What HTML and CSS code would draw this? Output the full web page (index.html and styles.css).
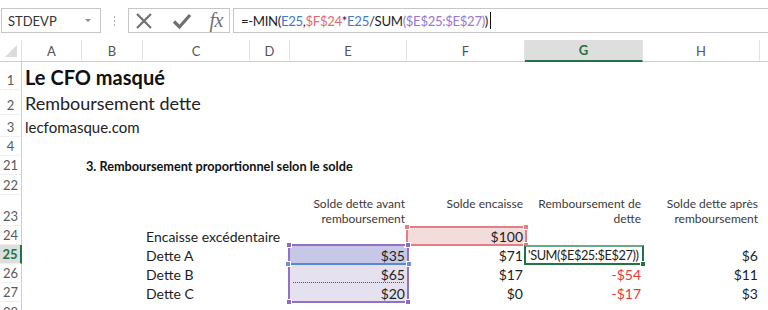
FILE: index.html
```html
<!DOCTYPE html>
<html lang="fr">
<head>
<meta charset="utf-8">
<title>Le CFO masqué</title>
<link rel="stylesheet" href="styles.css">
</head>
<body>
<div class="fbar">
  <div class="namebox"><span class="nb-text">STDEVP</span><span class="dd"></span></div>
  <div class="grip"><i></i><i></i><i></i></div>
  <div class="btns">
    <svg class="ico" width="20" height="20" viewBox="0 0 20 20"><path d="M3 3 L17 17 M17 3 L3 17" stroke="#707070" stroke-width="2.2" fill="none"/></svg>
    <svg class="ico" width="22" height="20" viewBox="0 0 22 20"><path d="M3 10.5 L8.5 16 L19 4" stroke="#707070" stroke-width="3.2" fill="none" stroke-linejoin="miter"/></svg>
    <span class="fx">fx</span>
  </div>
  <div class="formula"><span>=-MIN(</span><span class="fb">E25</span><span>,</span><span class="fr">$F$24</span><span>*</span><span class="fb">E25</span><span>/SUM</span><span class="fp">($E$25:$E$27)</span><span>)</span><span class="caret"></span></div>
</div>

<div class="sheet">
  <div class="row hdr">
    <div class="corner"><span class="tri"></span></div>
    <div class="ch">A</div><div class="ch">B</div><div class="ch">C</div><div class="ch">D</div><div class="ch">E</div><div class="ch">F</div><div class="ch ch-active">G</div><div class="ch">H</div><div class="ch"></div>
  </div>

  <div class="row r1">
    <div class="rh">1</div>
    <div class="c title span-all">Le CFO masqué</div>
  </div>
  <div class="row r2">
    <div class="rh">2</div>
    <div class="c subtitle span-all">Remboursement dette</div>
  </div>
  <div class="row r3">
    <div class="rh">3</div>
    <div class="c site span-all">lecfomasque.com</div>
  </div>
  <div class="row r4">
    <div class="rh">4</div>
  </div>
  <div class="row r21">
    <div class="rh">21</div>
    <div class="c"></div>
    <div class="c section span-rest">3. Remboursement proportionnel selon le solde</div>
  </div>
  <div class="row r22">
    <div class="rh">22</div>
  </div>
  <div class="row r23">
    <div class="rh">23</div>
    <div class="c"></div><div class="c"></div><div class="c"></div><div class="c"></div>
    <div class="c colhead">Solde dette avant remboursement</div>
    <div class="c colhead">Solde encaisse</div>
    <div class="c colhead">Remboursement de dette</div>
    <div class="c colhead">Solde dette après remboursement</div>
  </div>
  <div class="row r24">
    <div class="rh">24</div>
    <div class="c"></div><div class="c"></div>
    <div class="c">Encaisse excédentaire</div>
    <div class="c"></div><div class="c"></div>
    <div class="c num ref-red">$100<span class="box red"><i class="h tl"></i><i class="h tr"></i><i class="h bl"></i><i class="h br"></i></span></div>
  </div>
  <div class="row r25">
    <div class="rh rh-active">25</div>
    <div class="c"></div><div class="c"></div>
    <div class="c">Dette A</div>
    <div class="c"></div>
    <div class="c num e25">$35
      <span class="box purple"><i class="h tl"></i><i class="h tr"></i><i class="h bl"></i><i class="h br"></i></span>
      <span class="blueline"><i class="h bl"></i><i class="h br"></i></span>
    </div>
    <div class="c num">$71</div>
    <div class="c edit">'SUM($E$25:$E$27))<span class="box green"><i class="fill"></i></span></div>
    <div class="c num">$6</div>
  </div>
  <div class="row r26">
    <div class="rh">26</div>
    <div class="c"></div><div class="c"></div>
    <div class="c">Dette B</div>
    <div class="c"></div>
    <div class="c num erange dotted">$65</div>
    <div class="c num">$17</div>
    <div class="c num neg">-$54</div>
    <div class="c num">$11</div>
  </div>
  <div class="row r27">
    <div class="rh">27</div>
    <div class="c"></div><div class="c"></div>
    <div class="c">Dette C</div>
    <div class="c"></div>
    <div class="c num erange">$20</div>
    <div class="c num">$0</div>
    <div class="c num neg">-$17</div>
    <div class="c num">$3</div>
  </div>
  <div class="row r28">
    <div class="rh">28</div>
  </div>
</div>
</body>
</html>
```

FILE: styles.css
```css
* { box-sizing: border-box; }
html, body { margin: 0; padding: 0; background: #fff; }
body {
  width: 768px;
  height: 310px;
  overflow: hidden;
  font-family: Lato, "Liberation Sans", sans-serif;
  color: #1e1e1e;
}

/* ---------- formula bar ---------- */
.fbar {
  display: flex;
  align-items: stretch;
  height: 25px;
  margin-top: 8px;
}
.namebox {
  width: 100px;
  margin-left: 1px;
  border: 1px solid #c6c6c6;
  display: flex;
  align-items: center;
  justify-content: space-between;
  padding: 0 9px 0 6px;
  font-size: 13px;
  color: #333;
}
.dd {
  width: 0; height: 0;
  border-left: 3px solid transparent;
  border-right: 3px solid transparent;
  border-top: 3px solid #8a8a8a;
}
.grip {
  width: 27px;
  display: flex;
  flex-direction: column;
  align-items: center;
  justify-content: center;
  gap: 2px;
}
.grip i {
  display: block;
  width: 1px; height: 2px;
  background: #b0b0b0;
}
.btns {
  width: 102px;
  border: 1px solid #c6c6c6;
  display: flex;
  align-items: center;
  justify-content: space-between;
  padding: 0 6px 0 5px;
}
.fx {
  font-family: "Liberation Serif", serif;
  font-style: italic;
  font-size: 20px;
  color: #707070;
  line-height: 1;
  margin-top: -2px;
  letter-spacing: -0.5px;
}
.formula {
  flex: 1;
  margin-left: 3px;
  border: 1px solid #c6c6c6;
  border-right: none;
  display: flex;
  align-items: center;
  padding-left: 7px;
  font-size: 13.2px;
  letter-spacing: -0.35px;
  color: #1e1e1e;
  white-space: pre;
}
.fb { color: #4a78c8; }
.fr { color: #e06a6e; }
.fp { color: #9a78cf; }
.caret {
  display: inline-block;
  width: 1px;
  height: 17px;
  background: #111;
  margin-left: 2px;
}

/* ---------- sheet ---------- */
.sheet { margin-top: 7px; }
.row {
  display: grid;
  grid-template-columns: 22px 60px 61px 107px 40px 117px 118px 118px 117px 30px;
  height: 19px;
}
.hdr { height: 22px; border-bottom: 1px solid #cfcfcf; }
.r1 { height: 28px; }
.r2 { height: 25px; }
.r3 { height: 22px; }
.r22 { height: 20px; }
.r23 { height: 31px; }
.r28 { height: 20px; }

.corner {
  position: relative;
  border-right: 1px solid #e0e0e0;
}
.tri {
  position: absolute;
  right: 4px;
  bottom: 4px;
  width: 0; height: 0;
  border-left: 12px solid transparent;
  border-bottom: 12px solid #dcdcdc;
}
.ch {
  font-size: 13px;
  color: #555;
  display: flex;
  align-items: center;
  justify-content: center;
  border-right: 1px solid #e3e3e3;
}
.ch-active {
  background: #dedede;
  color: #217346;
  font-weight: bold;
  border-bottom: 2px solid #217346;
  margin-bottom: -1px;
}

.rh {
  grid-column: 1;
  font-size: 13px;
  color: #5a5a5a;
  display: flex;
  align-items: flex-end;
  justify-content: center;
  padding-bottom: 1px;
  border-right: 1px solid #cfcfcf;
  border-bottom: 1px solid #efefef;
  line-height: 16px;
}
.rh-active {
  background: #dedede;
  color: #217346;
  font-weight: bold;
  border-right: 2px solid #217346;
}

.c {
  position: relative;
  padding: 0 2px 0 3px;
  font-size: 14px;
  line-height: 17px;
  white-space: nowrap;
  display: flex;
  align-items: flex-end;
}
.span-all { grid-column: 2 / 10; }
.span-rest { grid-column: 3 / 10; }
.title { font-size: 20px; font-weight: bold; line-height: 26px; color: #111; }
.subtitle { font-size: 18px; line-height: 23px; color: #222; }
.site { font-size: 15px; line-height: 20px; color: #222; }
.section { font-size: 12.7px; font-weight: bold; padding-left: 4px; color: #111; }

.colhead {
  white-space: normal;
  font-size: 12px;
  line-height: 15px;
  text-align: right;
  align-items: flex-start;
  justify-content: flex-end;
  padding-top: 1px;
  color: #3a3a3a;
}
.num { justify-content: flex-end; }
.neg { color: #e33b3b; }

.ref-red { background: #f3dcdc; }
.e25 { background: #c7c8e8; }
.erange { background: #e6e1ef; }
.dotted::after {
  content: "";
  position: absolute;
  left: 3px; right: 3px; bottom: 0;
  border-bottom: 1px dotted #555;
}
.edit {
  font-size: 12.8px;
  letter-spacing: -0.45px;
  padding-left: 3px;
}

/* selection / reference boxes (overlays) */
.box {
  position: absolute;
  pointer-events: none;
  z-index: 2;
}
.box.red {
  left: -1px; right: -2px; top: 0; bottom: -1px;
  border: 2px solid #e47e82;
}
.box.purple {
  left: -2px; right: -2px; top: -1px;
  height: 59px;
  border: 2px solid #9270c2;
}
.box.green {
  left: -1px; right: -1px; top: 0; bottom: -1px;
  border: 2px solid #217346;
  border-top-color: #6aa886;
}
.blueline {
  position: absolute;
  left: -2px; right: -2px; bottom: -1px;
  height: 2px;
  background: #5b86d0;
  z-index: 3;
}
.h {
  position: absolute;
  width: 6px; height: 6px;
  border: 1px solid #fff;
}
.red .h { background: #e47e82; }
.purple .h { background: #8e6cbf; }
.blueline .h { background: #6a92d8; }
.h.tl { left: -4px; top: -4px; }
.h.tr { right: -4px; top: -4px; }
.h.bl { left: -4px; bottom: -4px; }
.h.br { right: -4px; bottom: -4px; }
.blueline .h.bl { left: -3px; bottom: -2px; }
.blueline .h.br { right: -3px; bottom: -2px; }
.fill {
  position: absolute;
  right: -4px; bottom: -4px;
  width: 6px; height: 6px;
  background: #217346;
  border: 1px solid #fff;
}
```
